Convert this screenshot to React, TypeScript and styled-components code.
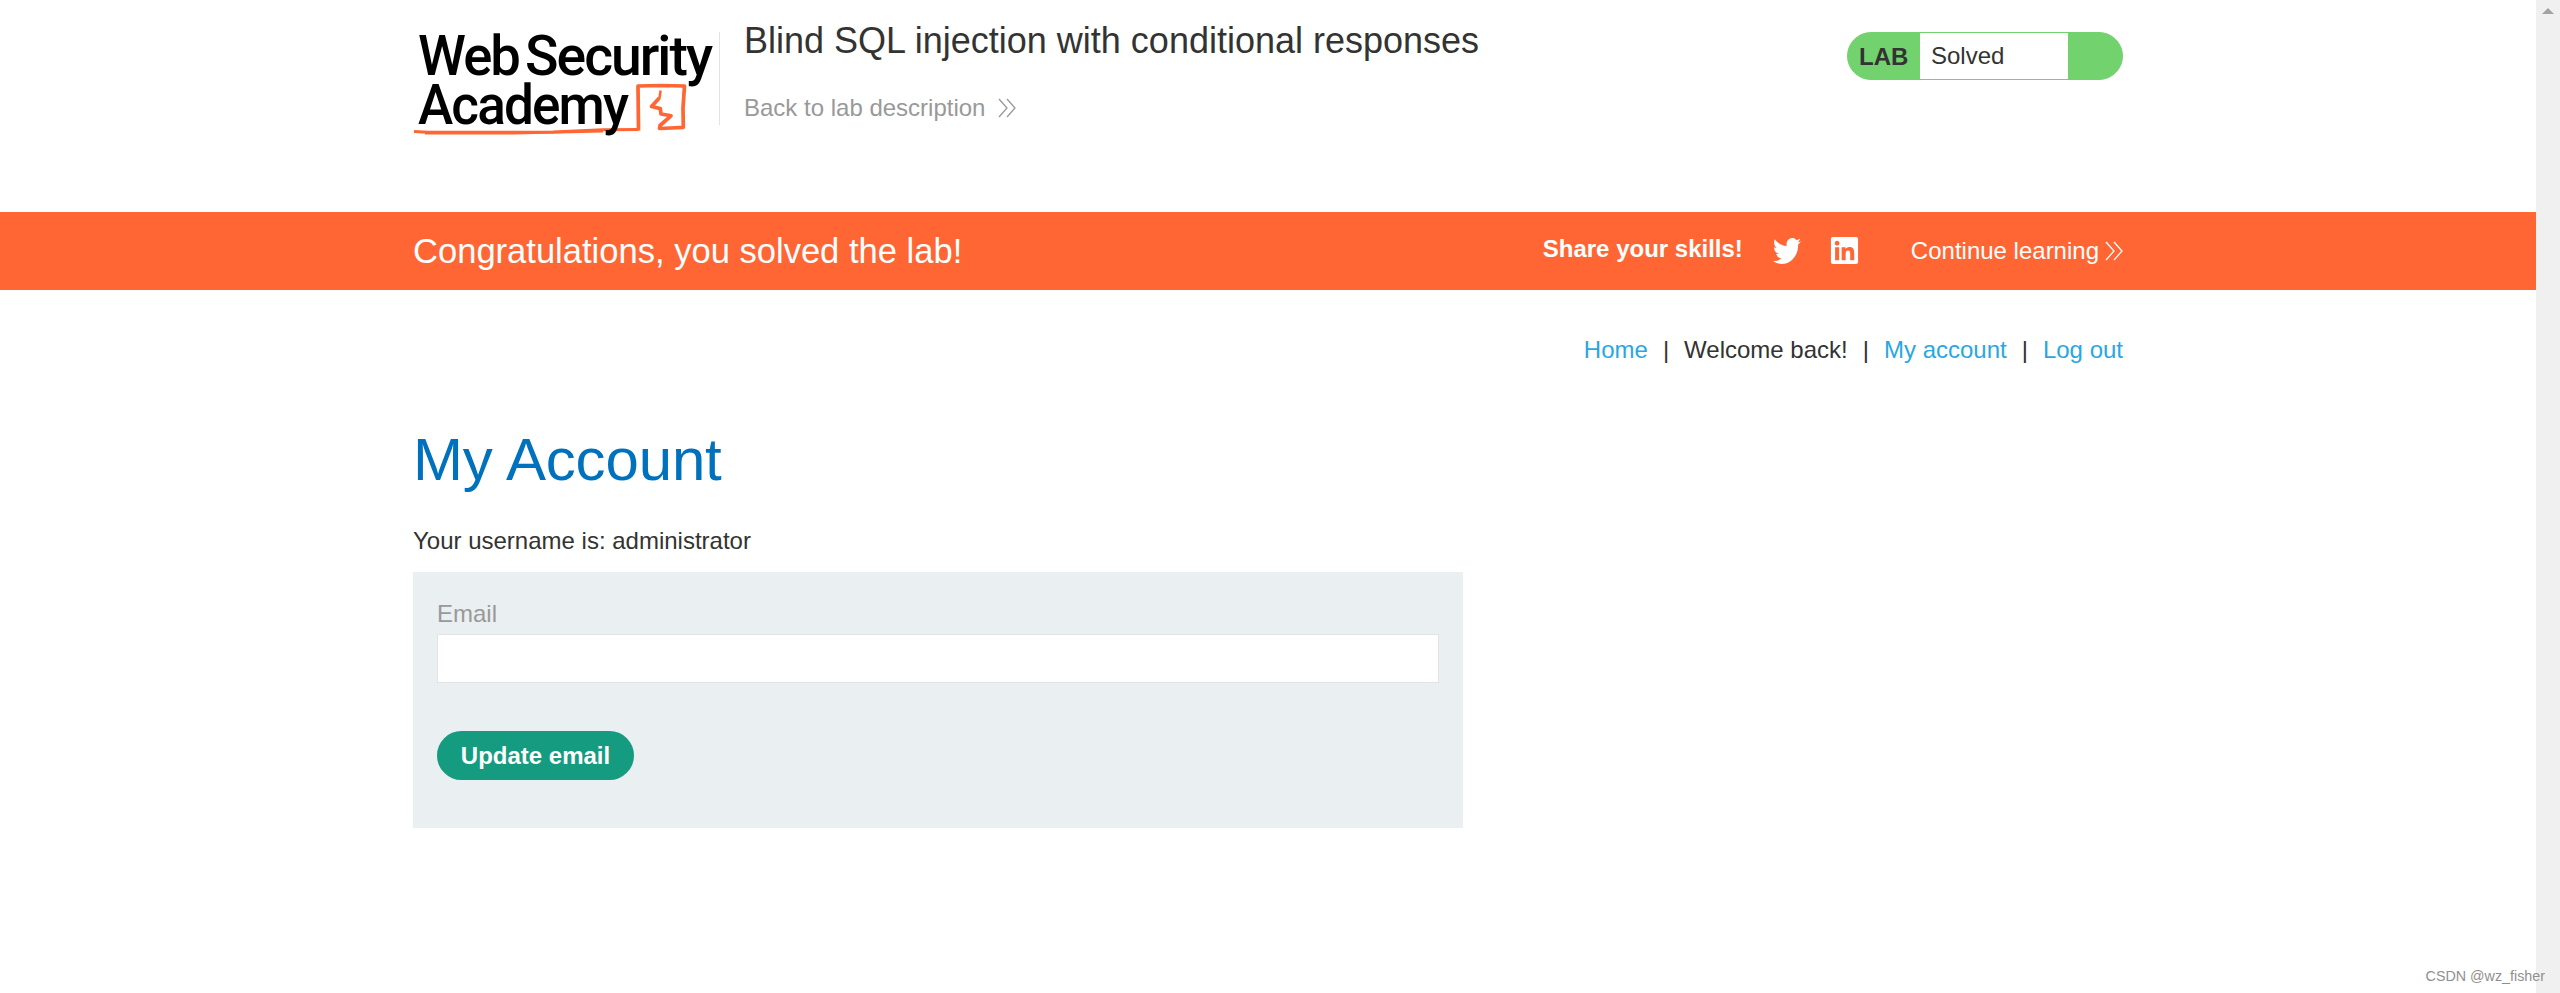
import React from "react";
import styled, { createGlobalStyle } from "styled-components";
import { FaLinkedin } from "react-icons/fa";

const GlobalStyle = createGlobalStyle`
  * { box-sizing: border-box; }
  body {
    margin: 0;
    background: #fff;
    color: #333332;
    font: 24px/30px "Liberation Sans", Arial, sans-serif;
    overflow: hidden;
  }
  h1, h2, h4, p { margin: 0; font-weight: 400; }
  a { color: inherit; text-decoration: none; }
`;

const Screen = styled.div`
  display: flex;
  height: 993px;
`;

const Page = styled.div`
  flex: 1;
`;

const Scrollbar = styled.div`
  width: 24px;
  background: #f0f0f0;
  display: flex;
  justify-content: center;
  padding-top: 8px;
`;

const Container = styled.div`
  width: 1710px;
  margin: 0 auto;
`;

const Header = styled(Container)`
  display: flex;
  align-items: flex-start;
  height: 212px;
`;

const LogoLink = styled.a`
  display: block;
  width: 307px;
  height: 93px;
  margin-top: 32px;
  border-right: 1px solid #e3e3e3;
`;

const Logo = styled.svg`
  display: block;
  overflow: visible;
  font-family: Roboto, sans-serif;
  font-weight: 500;
  font-size: 56px;
  letter-spacing: -2px;
  fill: #000;
`;

const TitleBlock = styled.div`
  flex: 1;
  padding: 20px 0 0 24px;
  white-space: nowrap;
`;

const LabTitle = styled.h2`
  font-size: 36px;
  line-height: 42px;
  margin-bottom: 31px;
`;

const BackLink = styled.a`
  display: flex;
  align-items: center;
  gap: 13px;
  color: #999;
`;

const Status = styled.div`
  display: flex;
  width: 276px;
  height: 48px;
  margin-top: 32px;
  border: 1px solid #72d26e;
  border-radius: 24px;
  background: #72d26e;
  overflow: hidden;
  line-height: 48px;
`;

const StatusLabel = styled.span`
  width: 72px;
  padding-left: 11px;
  font-weight: 700;
`;

const StatusValue = styled.span`
  width: 148px;
  padding-left: 11px;
  background: #fff;
  line-height: 46px;
`;

const Banner = styled.section`
  background: #ff6633;
  color: #fff;
`;

const BannerRow = styled(Container)`
  display: flex;
  align-items: center;
  height: 78px;
`;

const BannerTitle = styled.h4`
  flex: 1;
  font-size: 34.56px;
  line-height: 78px;
`;

const Share = styled.div`
  display: flex;
  align-items: center;
  gap: 30px;
  margin-right: 51px;
  svg { display: block; margin-bottom: 1px; }
  svg:last-child { margin-left: -2px; }
`;

const ShareLabel = styled.span`
  font-weight: 700;
  padding-bottom: 5px;
`;

const ContinueLink = styled.a`
  display: flex;
  align-items: center;
  gap: 6px;
`;

const Nav = styled(Container)`
  display: flex;
  justify-content: flex-end;
  gap: 15px;
  padding-top: 45px;
`;

const NavLink = styled.a`
  color: #29a7e2;
`;

const Heading = styled.h1`
  margin-top: 59px;
  color: #0071bd;
  font-size: 60px;
  line-height: 72px;
  letter-spacing: -0.15px;
`;

const Username = styled.p`
  margin: 30px 0 16px;
`;

const Form = styled.form`
  width: 1050px;
  height: 256px;
  padding: 27px 24px 0;
  background: #eaeff2;
`;

const Label = styled.label`
  display: block;
  margin-bottom: 5px;
  color: #999;
`;

const Input = styled.input`
  display: block;
  width: 100%;
  height: 49px;
  padding: 0 12px;
  border: 1px solid #e3e3e3;
  background: #fff;
  font: inherit;
  outline: none;
`;

const SubmitButton = styled.button`
  display: block;
  width: 197px;
  height: 49px;
  margin-top: 48px;
  padding: 0;
  border: 0;
  border-radius: 25px;
  background: #159b80;
  color: #fff;
  font: inherit;
  font-weight: 700;
  line-height: 49px;
`;

const Watermark = styled.div`
  position: absolute;
  right: 15px;
  bottom: 8px;
  color: #8f8f8f;
  font-size: 14.3px;
  line-height: 18px;
`;

const Chevrons = () => (
  <svg width="18" height="20" viewBox="0 0 18 20" fill="none" stroke="currentColor" strokeWidth="1.3">
    <path d="M1 1l8 9-8 9M9 1l8 9-8 9" />
  </svg>
);

const Bird = () => (
  <svg width="28" height="26" viewBox="0 2.2 24 19.6" preserveAspectRatio="none" fill="currentColor">
    <path d="M23.953 4.57a10 10 0 01-2.825.775 4.958 4.958 0 002.163-2.723c-.951.555-2.005.959-3.127 1.184a4.92 4.92 0 00-8.384 4.482C7.69 8.095 4.067 6.13 1.64 3.162a4.822 4.822 0 00-.666 2.475c0 1.71.87 3.213 2.188 4.096a4.904 4.904 0 01-2.228-.616v.06a4.923 4.923 0 003.946 4.827 4.996 4.996 0 01-2.212.085 4.936 4.936 0 004.604 3.417 9.867 9.867 0 01-6.102 2.105c-.39 0-.779-.023-1.17-.067a13.995 13.995 0 007.557 2.209c9.053 0 13.998-7.496 13.998-13.985 0-.21 0-.42-.015-.63A9.935 9.935 0 0024 4.59z" />
  </svg>
);

const AcademyLogo = () => (
  <Logo width="300" height="104" viewBox="0 0 300 104">
    <g fill="none" stroke="#ff6633" strokeLinejoin="round">
      <path d="M1 99.500L15 100.300 80 100.300 140 100 190 97.800 225.500 97.500" strokeWidth="3" />
      <path d="M12 101.500L100 101.500 190 99.500" strokeWidth="1.800" />
      <path d="M225.500 98.500L225 54 248 53.500 271.500 54 270 76 270.300 95.300 258 96 246.500 96.500 247 93.500 258 83.800 248 82 247.300 76.600 238.500 74.500 246.300 66" strokeWidth="3.700" />
      <path d="M238.500 74.500L246.500 66 247.600 58.500" strokeWidth="2.500" />
    </g>
    <text x="5" y="43" textLength="101" lengthAdjust="spacingAndGlyphs">Web</text>
    <text x="112" y="43" textLength="186" lengthAdjust="spacingAndGlyphs">Security</text>
    <text x="5" y="92" textLength="209" lengthAdjust="spacingAndGlyphs">Academy</text>
  </Logo>
);

export default function App() {
  return (
    <Screen>
      <GlobalStyle />
      <Page>
        <Header>
          <LogoLink><AcademyLogo /></LogoLink>
          <TitleBlock>
            <LabTitle>Blind SQL injection with conditional responses</LabTitle>
            <BackLink>Back to lab description <Chevrons /></BackLink>
          </TitleBlock>
          <Status>
            <StatusLabel>LAB</StatusLabel>
            <StatusValue>Solved</StatusValue>
          </Status>
        </Header>
        <Banner>
          <BannerRow>
            <BannerTitle>Congratulations, you solved the lab!</BannerTitle>
            <Share>
              <ShareLabel>Share your skills!</ShareLabel>
              <Bird />
              <FaLinkedin size={31} />
            </Share>
            <ContinueLink>Continue learning <Chevrons /></ContinueLink>
          </BannerRow>
        </Banner>
        <Nav as="nav">
          <NavLink>Home</NavLink><span>|</span>
          <span>Welcome back!</span><span>|</span>
          <NavLink>My account</NavLink><span>|</span>
          <NavLink>Log out</NavLink>
        </Nav>
        <Container as="main">
          <Heading>My Account</Heading>
          <Username>Your username is: administrator</Username>
          <Form>
            <Label htmlFor="email">Email</Label>
            <Input id="email" type="email" />
            <SubmitButton type="button">Update email</SubmitButton>
          </Form>
        </Container>
      </Page>
      <Scrollbar>
        <svg width="12" height="6" viewBox="0 0 12 6"><path d="M0 6L6 0l6 6z" fill="#a3a3a3" /></svg>
      </Scrollbar>
      <Watermark>CSDN @wz_fisher</Watermark>
    </Screen>
  );
}
